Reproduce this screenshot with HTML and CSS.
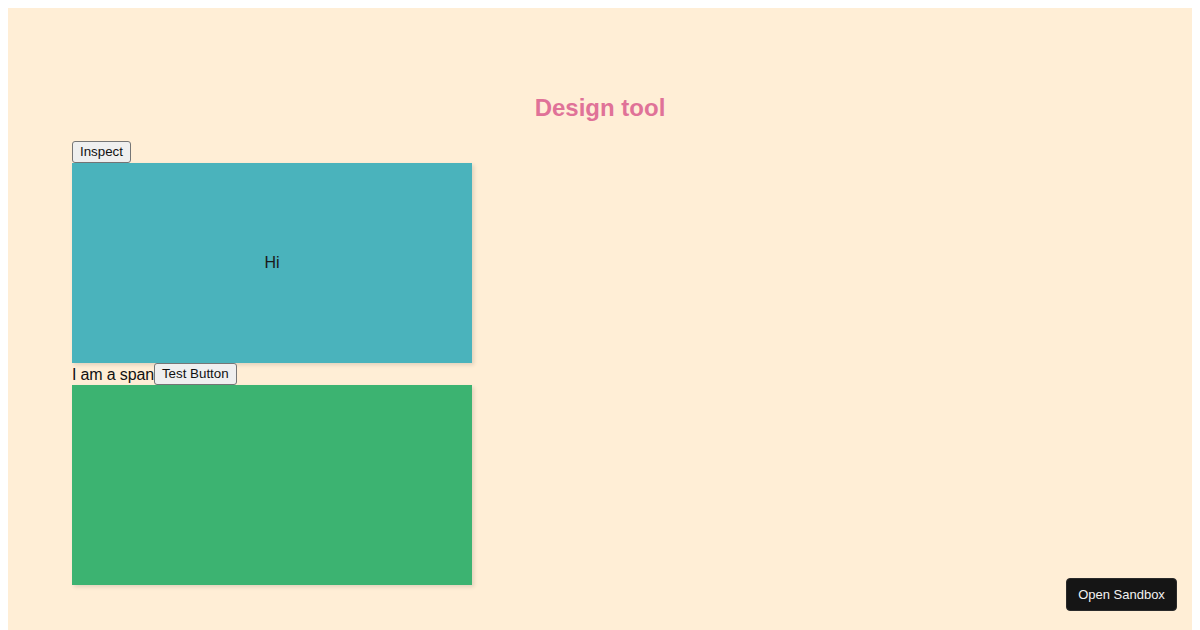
FILE: index.html
```html
<!DOCTYPE html>
<html>
<head>
<meta charset="utf-8">
<link rel="stylesheet" href="styles.css">
</head>
<body>
<div class="app">
  <h2 class="title">Design tool</h2>
  <div class="stage">
    <button class="btn">Inspect</button>
    <div class="box box-teal"><span class="hi">Hi</span></div>
    <div class="row"><span class="span-text">I am a span</span><button class="btn">Test Button</button></div>
    <div class="box box-green"></div>
  </div>
</div>
<button class="sandbox">Open Sandbox</button>
</body>
</html>
```
FILE: styles.css
```css
html, body {
  margin: 0;
  padding: 0;
}
body {
  margin: 8px;
  font-family: "Liberation Sans", Arial, sans-serif;
  color: #111;
}
.app {
  background: #ffeed6;
  min-height: 700px;
  padding: 73px 64px 0;
  box-sizing: border-box;
}
.title {
  margin: 13px 0 19px;
  text-align: center;
  font-size: 24px;
  line-height: 28px;
  font-weight: bold;
  color: #e07298;
}
.stage {
  display: flex;
  flex-direction: column;
  align-items: flex-start;
}
.btn {
  font-family: "Liberation Sans", Arial, sans-serif;
  font-size: 13.333px;
  height: 22px;
  padding: 1px 7px;
  background: #efefef;
  color: #111;
  border: 1px solid #767676;
  border-radius: 3px;
  line-height: 18px;
}
.box {
  width: 400px;
  height: 200px;
  box-shadow: 2px 2px 4px rgba(0, 0, 0, 0.12);
  display: flex;
  align-items: center;
  justify-content: center;
}
.box-teal {
  background: #4ab3bc;
}
.box-green {
  background: #3cb371;
}
.hi {
  font-size: 16px;
  color: #1a1a1a;
}
.row {
  display: flex;
  align-items: flex-end;
  height: 22px;
}
.span-text {
  font-size: 16px;
  line-height: 20px;
  letter-spacing: -0.15px;
  color: #111;
}
.sandbox {
  position: fixed;
  right: 23px;
  bottom: 19px;
  width: 111px;
  height: 33px;
  background: #151515;
  color: #f2f2f2;
  border: 1px solid #2a2a2a;
  border-radius: 4px;
  font-family: "Liberation Sans", Arial, sans-serif;
  font-size: 13px;
  padding: 0;
}
```
